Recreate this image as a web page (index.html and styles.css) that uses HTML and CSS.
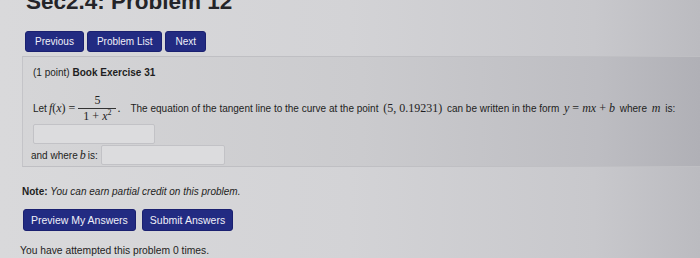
FILE: index.html
```html
<!DOCTYPE html>
<html lang="en">
<head>
  <meta charset="UTF-8">
  <title>Sec2.4: Problem 12</title>
  <link rel="stylesheet" href="styles.css">
</head>
<body>
  <div class="page">
    <h1 class="title">Sec2.4: Problem 12</h1>

    <!-- problem navigation -->
    <div class="nav">
      <button class="btn">Previous</button>
      <button class="btn">Problem List</button>
      <button class="btn">Next</button>
    </div>

    <div class="problem">
      <p class="head">(1 point) <b>Book Exercise 31</b></p>

      <div class="statement">
        Let <span class="math"><i>f</i>(<i>x</i>) =</span>
        <span class="frac"><span class="num">5</span><span class="den">1 + <i>x</i><sup>2</sup></span></span><span class="math">.</span>
        <span class="rest">The equation of the tangent line to the curve at the point <span class="math">(5, 0.19231)</span> can be written in the form <span class="math"><i>y</i> = <i>mx</i> + <i>b</i></span> where <span class="math"><i>m</i></span> is:</span>
      </div>
      <input type="text" class="answer wide">

      <div class="row">
        and where <span class="math"><i>b</i></span> is:
        <input type="text" class="answer">
      </div>
    </div>

    <p class="note"><b>Note:</b> <i>You can earn partial credit on this problem.</i></p>

    <div class="actions">
      <button class="btn big">Preview My Answers</button>
      <button class="btn big">Submit Answers</button>
    </div>

    <p class="attempts">You have attempted this problem 0 times.</p>
  </div>
</body>
</html>
```

FILE: styles.css
```css
html, body {
  margin: 0;
  height: 100%;
  overflow: hidden;
}

body {
  font-family: "Liberation Sans", Arial, sans-serif;
  color: #1e1e22;
  background: linear-gradient(90deg, #d9d9db 0%, #d3d3d6 50%, #c8c8cc 85%, #bbbbc0 100%);
}

.page {
  padding-left: 20px;
}

.title {
  margin: -12px 0 0 6px;
  font-size: 22.5px;
  line-height: 28px;
  font-weight: bold;
  color: #242428;
}

.nav {
  display: flex;
  gap: 3px;
  margin: 15px 0 0 5px;
}

.btn {
  font-family: "Liberation Sans", Arial, sans-serif;
  font-size: 10px;
  color: #f0f0f8;
  background: #222b82;
  border: 1px solid #1a2070;
  border-radius: 3px;
  height: 21px;
  padding: 0 9px;
}

.problem {
  margin-top: 4px;
  margin-left: 2px;
  height: 111px;
  box-sizing: border-box;
  padding: 9px 0 0 10px;
  background: linear-gradient(90deg, #d5d5d7 0%, #cbcbce 50%, #bdbdc2 85%, #b0b0b6 100%);
  border-top: 1px solid #bfbfc3;
  border-bottom: 1px solid #bfbfc3;
  border-left: 1px solid #c4c4c8;
  font-size: 10px;
}

.head {
  margin: 0;
  font-size: 10px;
  line-height: 14px;
}

.statement {
  display: flex;
  align-items: center;
  margin-top: 14px;
  white-space: nowrap;
}

.math {
  font-family: "Liberation Serif", "Times New Roman", serif;
  font-size: 12px;
  margin: 0 2px;
}

.frac {
  display: inline-flex;
  flex-direction: column;
  align-items: center;
  font-family: "Liberation Serif", "Times New Roman", serif;
  font-size: 12px;
  line-height: 13px;
  margin: 0 1px 0 3px;
}

.num {
  padding: 0 2px 1px;
  border-bottom: 1px solid #333;
  width: 100%;
  text-align: center;
}

.den {
  padding: 1px 3px 0;
}

.den sup {
  font-size: 8px;
  line-height: 0;
}

.rest {
  margin-left: 8px;
}

.answer {
  display: block;
  width: 122px;
  height: 20px;
  box-sizing: border-box;
  border: 1px solid #c2c2c6;
  border-radius: 2px;
  background: #dcdcde;
}

.wide {
  margin-top: 1px;
}

.row {
  display: flex;
  align-items: center;
  margin-top: 1px;
  margin-left: -2px;
}

.row .answer {
  margin-left: 3px;
  width: 124px;
}

.note {
  margin: 19px 0 0 2px;
  font-size: 10px;
}

.actions {
  display: flex;
  gap: 6px;
  margin-top: 12px;
  margin-left: 3px;
}

.big {
  font-size: 10.5px;
  height: 22px;
  padding: 0 7px;
}

.attempts {
  margin: 14px 0 0 0;
  font-size: 10.3px;
}
```
